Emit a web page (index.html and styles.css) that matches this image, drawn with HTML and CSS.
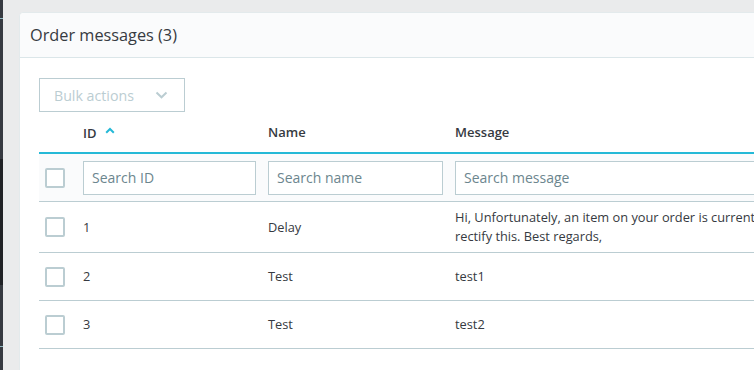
FILE: index.html
```html
<!DOCTYPE html>
<html lang="en">
<head>
<meta charset="utf-8">
<title>Order messages</title>
<link rel="stylesheet" href="styles.css">
</head>
<body>
<div class="layout">
  <div class="sidebar">
    <div class="seg s1"></div>
    <div class="seg line"></div>
    <div class="seg s2"></div>
    <div class="seg dark"></div>
    <div class="seg s3"></div>
    <div class="seg line"></div>
    <div class="seg s4"></div>
  </div>
  <main class="main">
    <section class="card">
      <header class="card-header">
        <h3 class="card-title">Order messages (3)</h3>
      </header>
      <div class="card-body">
        <button class="bulk-btn" type="button" disabled>
          <span>Bulk actions</span>
          <svg class="chev" width="13" height="8" viewBox="0 0 13 8"><path d="M1.5 1.5 L6.5 6.3 L11.5 1.5" fill="none" stroke="currentColor" stroke-width="2"/></svg>
        </button>
        <table class="grid">
          <colgroup>
            <col class="c-check">
            <col class="c-id">
            <col class="c-name">
            <col class="c-msg">
          </colgroup>
          <thead>
            <tr class="head-row">
              <th></th>
              <th><span class="th-label">ID</span><svg class="sort" width="10" height="7" viewBox="0 0 10 7"><path d="M1.2 5.8 L5 2 L8.8 5.8" fill="none" stroke="currentColor" stroke-width="2"/></svg></th>
              <th>Name</th>
              <th>Message</th>
            </tr>
            <tr class="filter-row">
              <td><span class="checkbox"></span></td>
              <td><input class="search" type="text" placeholder="Search ID"></td>
              <td><input class="search" type="text" placeholder="Search name"></td>
              <td><input class="search wide" type="text" placeholder="Search message"></td>
            </tr>
          </thead>
          <tbody>
            <tr class="data-row first">
              <td><span class="checkbox"></span></td>
              <td>1</td>
              <td>Delay</td>
              <td class="msg">Hi, Unfortunately, an item on your order is currently out of stock. This may cause a slight delay in delivery. Please accept our apologies and rest assured that we are working hard to<br>rectify this. Best regards,</td>
            </tr>
            <tr class="data-row">
              <td><span class="checkbox"></span></td>
              <td>2</td>
              <td>Test</td>
              <td class="msg">test1</td>
            </tr>
            <tr class="data-row">
              <td><span class="checkbox"></span></td>
              <td>3</td>
              <td>Test</td>
              <td class="msg">test2</td>
            </tr>
          </tbody>
        </table>
      </div>
    </section>
  </main>
</div>
</body>
</html>
```

FILE: styles.css
```css
html, body {
  margin: 0;
  padding: 0;
  overflow: hidden;
  width: 754px;
  height: 370px;
}
body {
  font-family: "Open Sans", "Noto Sans", "DejaVu Sans", sans-serif;
  color: #363a41;
  background: #eaebec;
}
.layout {
  display: flex;
  height: 370px;
}
.sidebar {
  width: 3px;
  flex: 0 0 3px;
  display: flex;
  flex-direction: column;
  background: #363a41;
}
.seg { flex: 0 0 auto; }
.s1 { height: 18px; }
.line { height: 1px; background: #8fb7c1; }
.s2 { height: 140px; }
.dark { height: 126px; background: #202226; }
.s3 { height: 61px; }
.s4 { flex: 1 1 auto; }

.main {
  flex: 1 1 auto;
  padding: 12px 0 0 16px;
  overflow: hidden;
}
.card {
  width: 1100px;
  background: #fff;
  border: 1px solid #e3eaec;
  border-radius: 4px 0 0 0;
  min-height: 400px;
}
.card-header {
  background: #fafbfc;
  border-bottom: 1px solid #dbe6e9;
  border-radius: 4px 0 0 0;
  height: 44px;
  display: flex;
  align-items: center;
  padding-left: 10px;
}
.card-title {
  margin: 0;
  font-size: 16.3px;
  font-weight: 400;
  color: #363a41;
}
.card-body {
  padding: 20px 19px;
}
.bulk-btn {
  display: flex;
  align-items: center;
  height: 34px;
  width: 146px;
  box-sizing: border-box;
  padding: 0 0 0 14px;
  border: 1px solid #bbcdd2;
  background: #fff;
  color: #bbcdd2;
  font-family: inherit;
  font-size: 14.2px;
  border-radius: 0;
}
.bulk-btn .chev {
  margin-left: 21px;
  color: #bbcdd2;
}
.grid {
  border-collapse: collapse;
  table-layout: fixed;
  width: 1060px;
}
.c-check { width: 38px; }
.c-id { width: 185px; }
.c-name { width: 187px; }
.c-msg { width: 650px; }
.grid th, .grid td {
  padding: 0 6px;
  text-align: left;
  vertical-align: middle;
}
.head-row th {
  height: 40px;
  font-size: 13px;
  font-weight: 600;
  color: #363a41;
  border-bottom: 2px solid #25b9d7;
}
.th-label { vertical-align: middle; }
.sort {
  color: #25b9d7;
  margin-left: 8px;
  vertical-align: middle;
  position: relative;
  top: -2px;
}
.filter-row td {
  height: 47px;
  background: #fafbfc;
  border-bottom: 1px solid #bbcdd2;
}
.search {
  display: block;
  box-sizing: border-box;
  width: 100%;
  height: 34px;
  border: 1px solid #bbcdd2;
  padding: 0 8px;
  font-family: inherit;
  font-size: 14px;
  color: #363a41;
  background: #fff;
  outline: none;
}
.search::placeholder { color: #6c868e; }
.checkbox {
  display: block;
  box-sizing: border-box;
  width: 20px;
  height: 20px;
  border: 2px solid #bbcdd2;
  border-radius: 2px;
  background: #fff;
}
.data-row td {
  height: 48px;
  font-size: 12.8px;
  line-height: 19px;
  color: #363a41;
  border-bottom: 1px solid #bbcdd2;
  padding-top: 6px;
  padding-bottom: 6px;
  box-sizing: border-box;
}
.data-row.first td { height: 51px; }
.msg { white-space: nowrap; }
```
